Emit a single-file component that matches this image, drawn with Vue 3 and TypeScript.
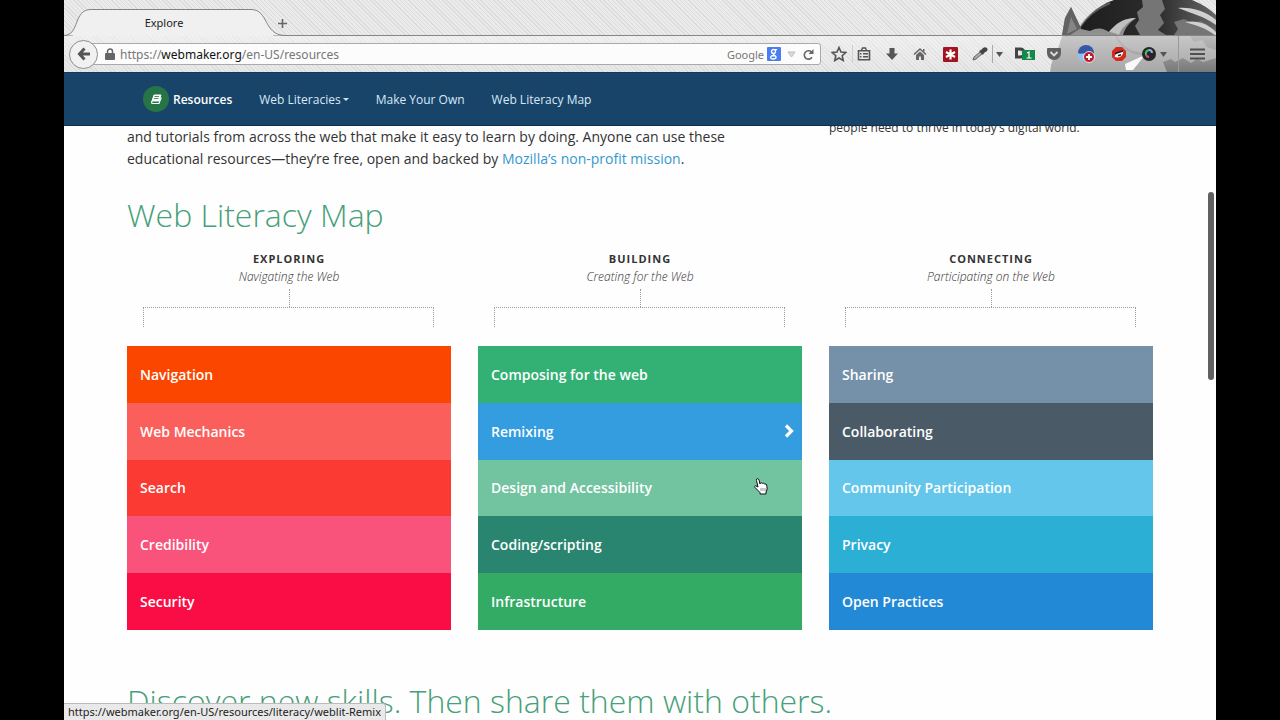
<script setup lang="ts">
interface Tile { label: string; color: string; active?: boolean }
interface Strand { title: string; subtitle: string; tiles: Tile[] }

const strands: Strand[] = [
  {
    title: 'Exploring',
    subtitle: 'Navigating the Web',
    tiles: [
      { label: 'Navigation', color: '#fb4600' },
      { label: 'Web Mechanics', color: '#fb5f5c' },
      { label: 'Search', color: '#fa3a33' },
      { label: 'Credibility', color: '#f9527b' },
      { label: 'Security', color: '#fa0d44' },
    ],
  },
  {
    title: 'Building',
    subtitle: 'Creating for the Web',
    tiles: [
      { label: 'Composing for the web', color: '#33b074' },
      { label: 'Remixing', color: '#349de0', active: true },
      { label: 'Design and Accessibility', color: '#72c3a0' },
      { label: 'Coding/scripting', color: '#29856f' },
      { label: 'Infrastructure', color: '#33ab64' },
    ],
  },
  {
    title: 'Connecting',
    subtitle: 'Participating on the Web',
    tiles: [
      { label: 'Sharing', color: '#7491a9' },
      { label: 'Collaborating', color: '#4a5a66' },
      { label: 'Community Participation', color: '#63c6ea' },
      { label: 'Privacy', color: '#2bafd4' },
      { label: 'Open Practices', color: '#2289d6' },
    ],
  },
]
</script>

<template>
  <div class="screen">
    <div class="window">
      <header class="chrome">
        <svg class="persona" width="166" height="72" viewBox="0 0 166 72" aria-hidden="true">
          <defs>
            <linearGradient id="globe" x1="0" y1="0" x2="1" y2="0">
              <stop offset="0" stop-color="#1c1c1c" />
              <stop offset=".6" stop-color="#2c2c2c" />
              <stop offset="1" stop-color="#666" />
            </linearGradient>
            <linearGradient id="fur" x1="0" y1="0" x2="0" y2="1">
              <stop offset="0" stop-color="#858585" />
              <stop offset="1" stop-color="#a0a0a0" />
            </linearGradient>
          </defs>
          <path d="M26 35C32 20 46 6 64 0h78c10 4 18 9 24 15v57H20z" fill="url(#globe)" />
          <path d="M60 3C48 8 36 17 30 27" fill="none" stroke="#999" stroke-width="2" opacity=".5" />
          <path d="M92 0h20l3 9-5 6 4 8-6 7 8 5H90l-5-9 4-6-2-8 6-5zM124 35l4-6-4-7 10-3 9 4 8-2 15 9v10z" fill="#757575" />
          <path d="M128 8c14-1 27 3 38 12v5c-12-9-23-11-38-17zm7 14c12-2 22 1 31 10v4c-10-8-18-10-31-14z" fill="#d0d0d0" />
          <path d="M12 36 15 18 21 7l10 22 9 2c8-4 14-3 20 2 7-10 15-15 26-15-7 5-11 10-13 17H166v37H0c1-9 4-18 9-26z" fill="url(#fur)" />
          <path d="M12 35 15 18 21 7l10 21-14 9z" fill="#626262" />
          <path d="M17 34 21 17l6 12z" fill="#858585" />
          <path d="M58 33c8-10 16-15 28-15-10 5-15 11-17 17-4-2-7-3-11-2z" fill="#c0c0c0" />
          <path d="M66 36c6 12 14 17 27 18l4 6" fill="none" stroke="#6d6d6d" stroke-width="2" opacity=".6" />
          <path d="M113 62l8-3 4 3 8-4 8 5 6-4 6 3 13-4v14h-49z" fill="#686868" />
          <path d="M140 36h26v14l-9-3-5-7-8 2z" fill="#747474" />
          <path d="M75 64l20-9-12 15h-7z" fill="#fff" />
        </svg>
        <div class="tabs">
          <svg class="tab-shape" width="222" height="28" viewBox="0 0 222 28" aria-hidden="true">
            <path d="M0 27.500C16 27 9 1.500 27 1.500H187C205 1.500 199 27 221 27.500" fill="#f0f0f0" stroke="#858585" />
            <path d="M9 27h200v1H9z" fill="#f0f0f0" />
          </svg>
          <button class="tab" type="button">Explore</button>
          <button class="new-tab" type="button" aria-label="New tab">
            <svg width="11" height="11" viewBox="0 0 11 11"><path d="M5.500 1v9M1 5.500h9" stroke="#666" stroke-width="1.600" /></svg>
          </button>
        </div>
        <div class="toolbar">
          <button class="back" type="button" aria-label="Back">
            <svg width="16" height="16" viewBox="0 0 16 16"><path d="M8.500 2.500 3.500 8l5 5.500M4 8h10" fill="none" stroke="#555" stroke-width="3" /></svg>
          </button>
          <div class="address">
            <svg width="10" height="12" viewBox="0 0 10 12"><path d="M2.500 6V3.500a2.500 2.500 0 0 1 5 0V6" fill="none" stroke="#666" stroke-width="1.500" /><rect y="5" width="10" height="7" rx="1" fill="#666" /></svg>
            <a class="url" href="#">https://<b>webmaker.org</b>/en-US/resources</a>
            <span class="engine">Google</span>
            <svg class="g" width="14" height="14" viewBox="0 0 14 14"><rect width="14" height="14" rx="1" fill="#4a7df0" /><g fill="none" stroke="#fff" stroke-width="1.300"><circle cx="6.500" cy="4.500" r="2" /><path d="M8 2.700h2M7 6.500c-2 1 1 1.500 1.500 2.500M6.700 8.500c-4 .2-4 3.500-.5 3.500s4-3 .5-3.500z" /></g></svg>
            <svg class="down" width="9" height="7" viewBox="0 0 9 7"><path d="M1 1h7L4.500 6z" fill="#ddd" stroke="#bbb" /></svg>
            <svg width="11" height="11" viewBox="0 0 11 11"><path d="M9 8.300A4.200 4.200 0 1 1 8.500 3" fill="none" stroke="#666" stroke-width="1.600" /><path d="M10.500 0v5h-5z" fill="#666" /></svg>
          </div>
          <div class="tools">
            <button type="button" aria-label="Bookmark"><svg width="16" height="16" viewBox="0 0 16 16"><path d="M8 1.500l2 4.500 4.700.5-3.500 3.200 1 4.800L8 12l-4.200 2.500 1-4.800L1.300 6.500 6 6z" fill="none" stroke="#555" stroke-width="1.600" /></svg></button>
            <i class="sep-first"></i>
            <button type="button" aria-label="Reading list"><svg width="14" height="14" viewBox="0 0 14 14"><path d="M1.500 3.700h11v9h-11z" fill="none" stroke="#555" stroke-width="1.600" /><path d="M4.500 3.500 5.500 1h3l1 2.500" fill="none" stroke="#555" stroke-width="1.400" /><path d="M3 6.700h1.500M6 6.700h5M3 9.700h1.500M6 9.700h5" stroke="#555" stroke-width="1.400" /></svg></button>
            <button type="button" aria-label="Downloads"><svg width="14" height="14" viewBox="0 0 14 14"><path d="M4.500 1h5v5.500H13L7 13 1 6.500h3.500z" fill="#555" /></svg></button>
            <button type="button" aria-label="Home" class="home"><svg width="14" height="14" viewBox="0 0 14 14"><path d="M1 7.500 7 2l6 5.500" fill="none" stroke="#666" stroke-width="1.600" /><path d="M10 2h1.500v3L10 4z" fill="#666" /><path d="M3 8 7 4.500 11 8v5H8V9.500H6V13H3z" fill="#666" /></svg></button>
            <button type="button" aria-label="LastPass"><svg width="15" height="15" viewBox="0 0 15 15"><rect width="15" height="15" rx="1" fill="#a3141e" /><path d="M7.500 2.500v10M3 5l9 5M12 5l-9 5" stroke="#fff" stroke-width="2.200" /></svg></button>
            <button type="button" aria-label="Eyedropper"><svg width="16" height="14" viewBox="0 0 16 14"><path d="M1 13l1-3 6-5 2 2-6 5z" fill="#aaa" stroke="#666" /><path d="M7 4l4 4 1-2 3-2c2-3-2-5-4-3L9 3z" fill="#444" /></svg></button>
            <i class="sep-drop"></i>
            <svg class="caret" width="7" height="5" viewBox="0 0 7 5"><path d="M0 0h7L3.500 5z" fill="#555" /></svg>
            <button type="button" aria-label="Link counter" class="counter"><svg width="20" height="14" viewBox="0 0 20 14"><path d="M1.500 2H5q4 0 4 4t-4 4H1.500z" fill="none" stroke="#444" stroke-width="3" /><rect x="7" y="3" width="13" height="10" fill="#16884a" /><path d="M12 6l2-1v6M11.500 11h5" stroke="#fff" fill="none" stroke-width="1.200" /></svg></button>
            <button type="button" aria-label="Pocket"><svg width="14" height="13" viewBox="0 0 14 13"><path d="M1 0h12q1 0 1 1v4a7 7 0 0 1-14 0V1q0-1 1-1z" fill="#606060" /><path d="M3.500 4 7 7.500 10.500 4" fill="none" stroke="#ddd" stroke-width="1.800" /></svg></button>
            <button type="button" aria-label="Add feed" class="feed"><svg width="18" height="18" viewBox="0 0 18 18"><path d="M1 8a8 8 0 0 1 16 0l-4 4-8-2z" fill="#3656a8" /><path d="M1 9l9-1-5 9q-4-3-4-8z" fill="#8ec3f0" /><circle cx="12" cy="12" r="5.500" fill="#b61d2e" stroke="#fff" stroke-width=".8" /><path d="M12 9v6M9 12h6" stroke="#fff" stroke-width="1.800" /></svg></button>
            <button type="button" aria-label="Block scripts" class="block"><svg width="14" height="14" viewBox="0 0 14 14"><path d="M4 0h6l4 4v6l-4 4H4l-4-4V4z" fill="#d6281c" /><path d="M2.500 9.500q1-4 9-5.500-1 6-5.500 6.500-2.500 0-3.500-1z" fill="#fff" /><path d="M3 6.500l8-2.500M6 8.700l3-1" stroke="#222" stroke-width="1.500" /></svg></button>
            <button type="button" aria-label="Colour tool" class="colour"><svg width="14" height="14" viewBox="0 0 14 14"><circle cx="7" cy="7" r="7" fill="#272727" /><g fill="none" stroke-width="2"><path d="M4 8q-1-4 3-5" stroke="#35cf59" /><path d="M7 3q3 0 3 3" stroke="#9aa8ee" /><path d="M4 8q1 2 3 2" stroke="#d94b87" /></g></svg></button>
            <svg class="caret" width="7" height="5" viewBox="0 0 7 5"><path d="M0 0h7L3.500 5z" fill="#555" /></svg>
            <i class="sep-menu"></i>
            <button type="button" aria-label="Menu"><svg width="15" height="12" viewBox="0 0 15 12"><path d="M0 1.500h15M0 6h15M0 10.500h15" stroke="#505050" stroke-width="2" /></svg></button>
          </div>
        </div>
      </header>

      <nav class="nav">
        <a class="brand" href="#">
          <svg width="26" height="26" viewBox="0 0 26 26" aria-hidden="true"><circle cx="13" cy="13" r="13" fill="#267546" /><path d="M11 9h7l-2 6H9z" fill="#fff" stroke="#fff" stroke-linejoin="round" /><path d="M11.500 10.500H16M11 12.500h4.500" stroke="#267546" stroke-width=".8" /><path d="M9 15q-1 2.500.5 2.500h6.500l2.200-6" fill="none" stroke="#fff" stroke-width="1.200" /></svg>
          Resources
        </a>
        <a href="#">Web Literacies <i class="nav-caret"></i></a>
        <a href="#">Make Your Own</a>
        <a href="#">Web Literacy Map</a>
      </nav>

      <main class="page">
        <section class="intro">
          <p>and tutorials from across the web that make it easy to learn by doing. Anyone can use these educational resources—they’re free, open and backed by <a href="#">Mozilla’s non-profit mission</a>.</p>
          <aside>people need to thrive in today’s digital world.</aside>
        </section>
        <h1>Web Literacy Map</h1>
        <div class="strands">
          <section v-for="s in strands" :key="s.title" class="strand">
            <h2>{{ s.title }}</h2>
            <p class="subtitle">{{ s.subtitle }}</p>
            <div class="stem"></div>
            <div class="bracket"></div>
            <ul>
              <li v-for="t in s.tiles" :key="t.label">
                <a href="#" :style="{ backgroundColor: t.color }">
                  {{ t.label }}
                  <svg v-if="t.active" width="10" height="14" viewBox="0 0 10 14" aria-hidden="true"><path d="M2 1.500 7.500 7 2 12.500" fill="none" stroke="#fff" stroke-width="3.200" /></svg>
                </a>
              </li>
            </ul>
          </section>
        </div>
        <h1 class="next">Discover new skills. Then share them with others.</h1>
        <div class="scrollbar"></div>
        <div class="status">https://webmaker.org/en-US/resources/literacy/weblit-Remix</div>
      </main>

      <svg class="pointer" width="14" height="17" viewBox="0 0 14 17" aria-hidden="true"><path d="M4 9 2.500 2.500Q2 .8 3.200.7T5 2l1 4 .5-1Q8 4.300 8.700 5.500q1.300-.8 2 .5 1.500-.5 2 1l.5 4-1.200 3v2H6v-1.500L1 9.500Q.2 8 1.500 7.700z" fill="#fff" stroke="#111" /><path d="M7 10v3M9 10v3M11 10v3" stroke="#777" stroke-width=".8" /></svg>
    </div>
  </div>
</template>

<style>
body { background: #000; }
</style>

<style scoped>
* { box-sizing: border-box; }
.screen { height: 100vh; padding: 0 5%; background: #000; font-family: "Open Sans", "Noto Sans", sans-serif; color: #333; }
.window { position: relative; height: 100%; display: flex; flex-direction: column; overflow: hidden; background: #fefefe; }
button { border: 0; padding: 0; background: none; display: flex; align-items: center; justify-content: center; font: inherit; color: inherit; }
a { color: inherit; text-decoration: none; }
svg { display: block; flex: none; }
h1, h2, p, ul { margin: 0; padding: 0; font-weight: 400; }
ul { list-style: none; }

.chrome { position: relative; flex: none; font-family: "Noto Sans", "Open Sans", sans-serif; background: repeating-linear-gradient(45deg, #dcdcdc 0 1px, #ebebeb 1px 3px); border-bottom: 1px solid #143a5c; }
.persona { position: absolute; right: 0; top: 0; }
.tabs { position: relative; height: 36px; display: flex; align-items: center; border-bottom: 1px solid #858585; }
.tab-shape { position: absolute; left: 0; bottom: -1px; }
.tab { position: relative; width: 200px; padding-top: 10px; font-size: 11px; color: #222; }
.new-tab { position: relative; margin: 11px 0 0 13px; }
.toolbar { position: relative; height: 36px; display: flex; align-items: center; padding: 0 11px 0 5px; background: linear-gradient(rgba(245, 245, 245, .55), rgba(215, 215, 215, .15)); }
.back { position: relative; z-index: 1; width: 29px; height: 29px; border: 1px solid #8e8e8e; border-radius: 50%; background: #f1f1f1; }
.address { flex: 1; height: 22px; margin-left: -8px; padding: 0 6px 0 14px; display: flex; align-items: center; border: 1px solid #aaa; border-radius: 0 3px 3px 0; background: #fcfcfc; font-size: 12px; color: #777; }
.url { flex: 1; margin-left: 5px; }
.url b { font-weight: 400; color: #111; }
.engine { font-size: 11px; }
.g { margin: 0 6px 0 3px; }
.down { margin-right: 7px; }
.tools { display: flex; align-items: center; margin-left: 10px; }
.tools button { margin-right: 14px; }
.tools i { width: 1px; height: 18px; background: #bbb; }
.tools .sep-first { margin: 0 4px 0 -9px; background: #d0d0d0; }
.tools .home { margin-right: 16px; }
.tools .sep-drop { margin: 0 3px 0 -10px; background: #aaa; }
.tools .counter { margin-left: 12px; margin-right: 12px; }
.tools .feed { margin-left: 2px; }
.tools .block { margin-left: 3px; margin-right: 16px; }
.tools .colour { margin-right: 4px; }
.tools .sep-menu { height: 36px; margin: 0 11px; background: #999; }
.tools button:last-child { margin-right: 0; }

.nav { flex: none; height: 53px; display: flex; align-items: center; gap: 27px; padding-left: 79px; background: #184469; border-bottom: 1px solid #0e2f4c; color: #d8e8f6; font-size: 12px; font-weight: 500; }
.nav a { display: flex; align-items: center; }
.nav .brand { gap: 4px; color: #fff; font-weight: 600; }
.nav-caret { margin-left: 2px; border: 3px solid transparent; border-top-color: #cfe0f0; border-bottom: 0; }

.page { position: relative; flex: 1; min-height: 0; overflow: hidden; padding: 0 63px; }
.intro { display: grid; grid-template-columns: repeat(3, 1fr); column-gap: 27px; font-size: 14px; line-height: 22px; }
.intro p { grid-column: span 2; max-width: 640px; }
.intro a { color: #3498d0; }
.intro aside { margin-top: -8px; font-size: 12px; line-height: 20px; }
h1 { margin-top: 22px; font-size: 32px; line-height: 46px; font-weight: 300; color: #46a078; }
.strands { display: grid; grid-template-columns: repeat(3, 1fr); gap: 27px; margin-top: 12px; }
.strand { display: flex; flex-direction: column; }
h2 { text-align: center; text-transform: uppercase; font-size: 11px; line-height: 18px; font-weight: 700; letter-spacing: 1px; }
.subtitle { text-align: center; font-size: 12px; line-height: 18px; font-style: italic; font-weight: 300; }
.stem { width: 1px; height: 18px; margin: 3px auto 0; border-left: 1px dotted #999; }
.bracket { height: 20px; margin: 0 17px 0 16px; border: 1px dotted #999; border-bottom: 0; }
.strand ul { display: grid; grid-auto-rows: 1fr; min-height: 284px; margin-top: 19px; }
li { display: flex; }
li a { flex: 1; display: flex; align-items: center; justify-content: space-between; padding: 0 8px 0 13px; color: #fff; font-size: 14px; font-weight: 600; }
h1.next { margin-top: 48px; }
.scrollbar { position: absolute; right: 2px; top: 66px; width: 6px; height: 188px; border-radius: 3px; background: #606060; }
.status { position: absolute; left: 0; bottom: 0; height: 17px; padding: 0 4px; border: 1px solid #bbb; border-left: 0; border-bottom: 0; border-radius: 0 3px 0 0; background: #e9e9e9; color: #222; font-family: "Noto Sans", sans-serif; font-size: 11px; line-height: 16px; }
.pointer { position: absolute; left: 690px; top: 478px; }
</style>
